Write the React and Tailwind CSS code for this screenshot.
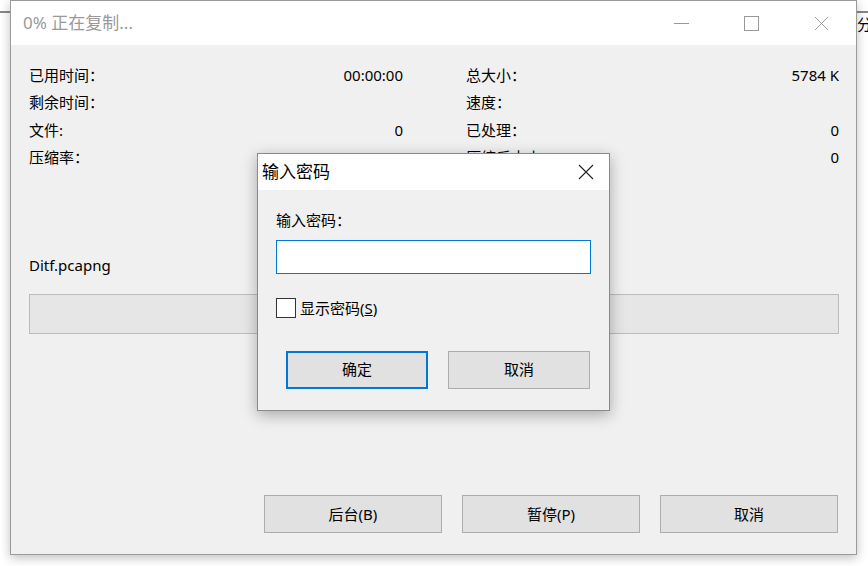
import React from "react";

const font = { fontFamily: '"Noto Sans", "Noto Sans CJK SC", sans-serif' };

const leftRows = [
  { label: "已用时间：", value: "00:00:00" },
  { label: "剩余时间：", value: "" },
  { label: "文件:", value: "0" },
  { label: "压缩率：", value: "" },
];

const rightRows = [
  { label: "总大小：", value: "5784 K" },
  { label: "速度：", value: "" },
  { label: "已处理：", value: "0" },
  { label: "压缩后大小：", value: "0" },
];

const XIcon = ({ size = 16, color = "#000", stroke = 1 }) => (
  <svg width={size} height={size} viewBox="0 0 16 16">
    <path d="M1 1 L15 15 M15 1 L1 15" stroke={color} strokeWidth={stroke} fill="none" />
  </svg>
);

const InfoColumn = ({ rows }) => (
  <div className="flex flex-col">
    {rows.map((r) => (
      <div key={r.label} className="h-[27.5px] flex items-center justify-between">
        <span>{r.label}</span>
        <span>{r.value}</span>
      </div>
    ))}
  </div>
);

const WinButton = ({ children, width, primary }) => (
  <button
    className={`${width} h-[38px] bg-[#e1e1e1] text-[15px] text-black flex items-center justify-center ${
      primary ? "border-2 border-[#0078d7]" : "border border-[#adadad]"
    }`}
  >
    {children}
  </button>
);

const PasswordDialog = () => (
  <div className="absolute left-[257px] top-[153px] w-[353px] h-[258px] border border-[#8a8a8a] bg-[#f0f0f0] shadow-[0_4px_14px_rgba(0,0,0,0.3)] flex flex-col">
    <div className="h-[36px] bg-white flex items-center justify-between pl-[4px] pr-[15px]">
      <span className="text-[17px] text-black">输入密码</span>
      <XIcon size={16} color="#222" stroke={1.1} />
    </div>
    <div className="flex flex-col px-[18px] pt-[20px] text-[15px]">
      <span className="leading-[20px]">输入密码：</span>
      <div className="mt-[10px] h-[34px] w-[315px] border border-[#0078d7] bg-white" />
      <label className="mt-[23px] flex items-center gap-[4px]">
        <span className="w-[20px] h-[20px] border border-[#333] bg-white" />
        <span>
          显示密码(<span className="underline">S</span>)
        </span>
      </label>
      <div className="mt-[31px] flex gap-[20px] pl-[10px]">
        <WinButton width="w-[142px]" primary>确定</WinButton>
        <WinButton width="w-[142px]">取消</WinButton>
      </div>
    </div>
  </div>
);

export default function App() {
  return (
    <div className="relative w-[868px] h-[566px] bg-white overflow-hidden text-black" style={font}>
      <div className="absolute left-0 top-[11px] w-[868px] h-[2px] bg-[#888]" />
      <div className="absolute left-[857px] top-[14px] text-[15px] leading-[20px] whitespace-nowrap">分割</div>

      <div className="relative ml-[10px] w-[847px] h-[555px] border border-[#9a9a9a] bg-[#f0f0f0] shadow-[0_3px_10px_rgba(0,0,0,0.25)] flex flex-col">
        <div className="h-[44px] bg-white flex items-center justify-between pl-[12px]">
          <span className="text-[17px] text-[#999]">0% 正在复制...</span>
          <div className="flex items-center h-full">
            <div className="w-[70px] h-full flex items-center justify-center">
              <div className="w-[15px] h-[1px] bg-[#999]" />
            </div>
            <div className="w-[70px] h-full flex items-center justify-center">
              <div className="w-[15px] h-[15px] border border-[#999]" />
            </div>
            <div className="w-[70px] h-full flex items-center justify-center">
              <XIcon size={15} color="#999" stroke={1} />
            </div>
          </div>
        </div>

        <div className="flex-1 flex flex-col px-[18px] pt-[16px] text-[15px]">
          <div className="grid grid-cols-[374px_373px] gap-x-[63px]">
            <InfoColumn rows={leftRows} />
            <InfoColumn rows={rightRows} />
          </div>
          <div className="mt-[84px] h-[20px] leading-[20px]">Ditf.pcapng</div>
          <div className="mt-[19px] h-[40px] w-[810px] bg-[#e6e6e6] border border-[#bcbcbc]" />
          <div className="mt-auto mb-[21px] flex justify-end gap-[20px]">
            <WinButton width="w-[178px]">后台(B)</WinButton>
            <WinButton width="w-[178px]">暂停(P)</WinButton>
            <WinButton width="w-[178px]">取消</WinButton>
          </div>
        </div>
      </div>

      <PasswordDialog />
    </div>
  );
}
